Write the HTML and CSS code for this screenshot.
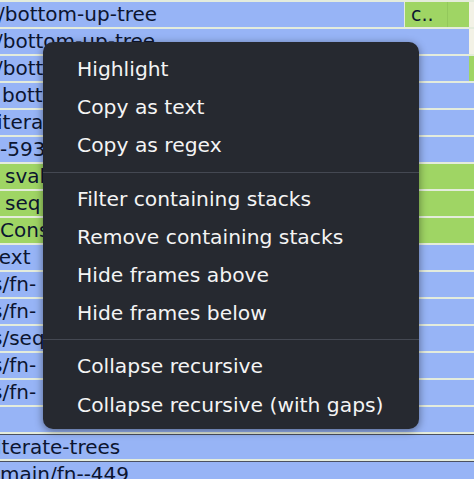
FILE: index.html
```html
<!DOCTYPE html>
<html lang="en">
<head>
    <meta charset="UTF-8">
    <title>Flame graph menu</title>
    <link rel="stylesheet" href="styles.css">
</head>
<body>

    <div class="graph">
        <div class="row">
            <div class="frame blue grow"><span class="label" style="margin-left:-2px">/bottom-up-tree</span></div>
            <div class="frame green w42"><span class="label">c..</span></div>
            <div class="frame green w21"></div>
            <div class="frame empty"></div>
        </div>
        <div class="row">
            <div class="frame blue grow"><span class="label" style="margin-left:-4px">/bottom-up-tree</span></div>
            <div class="frame empty"></div>
        </div>
        <div class="row">
            <div class="frame blue grow"><span class="label" style="margin-left:-4px">/bottom-up-tree</span></div>
            <div class="frame green edge"></div>
        </div>
        <div class="row">
            <div class="frame blue grow"><span class="label" style="margin-left:2px">bottom-up-tree</span></div>
        </div>
        <div class="row">
            <div class="frame blue grow"><span class="label" style="margin-left:-3px">iterate-trees</span></div>
        </div>
        <div class="row">
            <div class="frame blue grow"><span class="label" style="margin-left:0">-593</span></div>
        </div>
        <div class="row">
            <div class="frame green grow"><span class="label" style="margin-left:5px">sval</span></div>
        </div>
        <div class="row">
            <div class="frame green grow"><span class="label" style="margin-left:5px">seq</span></div>
        </div>
        <div class="row">
            <div class="frame green grow"><span class="label" style="margin-left:0">Cons</span></div>
        </div>
        <div class="row">
            <div class="frame blue grow"><span class="label" style="margin-left:-9px">text</span></div>
        </div>
        <div class="row">
            <div class="frame blue grow"><span class="label" style="margin-left:-8px">s/fn-</span></div>
        </div>
        <div class="row">
            <div class="frame blue grow"><span class="label" style="margin-left:-8px">s/fn-</span></div>
        </div>
        <div class="row">
            <div class="frame blue grow"><span class="label" style="margin-left:-8px">s/seq</span></div>
        </div>
        <div class="row">
            <div class="frame blue grow"><span class="label" style="margin-left:-8px">s/fn-</span></div>
        </div>
        <div class="row">
            <div class="frame blue grow"><span class="label" style="margin-left:-8px">s/fn-</span></div>
        </div>
        <div class="row">
            <div class="frame blue grow"></div>
        </div>
        <div class="row lined">
            <div class="frame blue grow"><span class="label" style="margin-left:-4px">iterate-trees</span></div>
        </div>
        <div class="row lined">
            <div class="frame blue grow"><span class="label" style="margin-left:0">main/fn--449</span></div>
        </div>
    </div>

    <div class="context-menu">
        <div class="menu-item">Highlight</div>
        <div class="menu-item">Copy as text</div>
        <div class="menu-item">Copy as regex</div>
        <div class="menu-sep"></div>
        <div class="menu-item">Filter containing stacks</div>
        <div class="menu-item">Remove containing stacks</div>
        <div class="menu-item">Hide frames above</div>
        <div class="menu-item">Hide frames below</div>
        <div class="menu-sep"></div>
        <div class="menu-item">Collapse recursive</div>
        <div class="menu-item">Collapse recursive (with gaps)</div>
    </div>

</body>
</html>
```

FILE: styles.css
```css
body {
    margin: 0;
    position: relative;
    background: #f3f2e6;
    font-family: "DejaVu Sans", Verdana, sans-serif;
    overflow: hidden;
    height: 479px;
}

/* Flame graph rows */
.graph { display: flex; flex-direction: column; gap: 2px; padding-top: 2px; background: #e4ecdc; }
.row { display: flex; height: 25px; }
.row.lined { box-shadow: inset 0 1px #4a5060; background: #e4ecdc; }
.frame { height: 25px; overflow: hidden; white-space: nowrap; }
.frame.grow { flex: 1; }
.frame.w42 { width: 42px; margin-left: 1px; }
.frame.w21 { width: 21px; border-left: 1px solid #93c85c; }
.frame.edge { width: 5px; margin-left: 0; }
.frame.empty { width: 5px; background: #f3f2e6; }
.blue { background: #97b4f6; }
.green { background: #9fd564; }
.row.lined .frame { margin-top: 1px; height: 24px; }
.label {
    display: inline-block;
    font-size: 20px;
    line-height: 25px;
    color: #0c1530;
}
.w42 .label { margin-left: 6px; font-size: 19px; }

/* Context menu */
.context-menu {
    position: absolute;
    left: 43px;
    top: 42px;
    width: 376px;
    padding: 8px 0 5px;
    background: #262930;
    border-radius: 10px;
    box-shadow: 0 2px 8px rgba(0, 0, 0, 0.45);
}
.menu-item {
    height: 38.2px;
    line-height: 38.2px;
    padding-left: 34px;
    font-size: 20.3px;
    color: #f4f4f4;
    white-space: nowrap;
}
.menu-sep { height: 1px; margin: 7px 0; background: #444852; }
```
